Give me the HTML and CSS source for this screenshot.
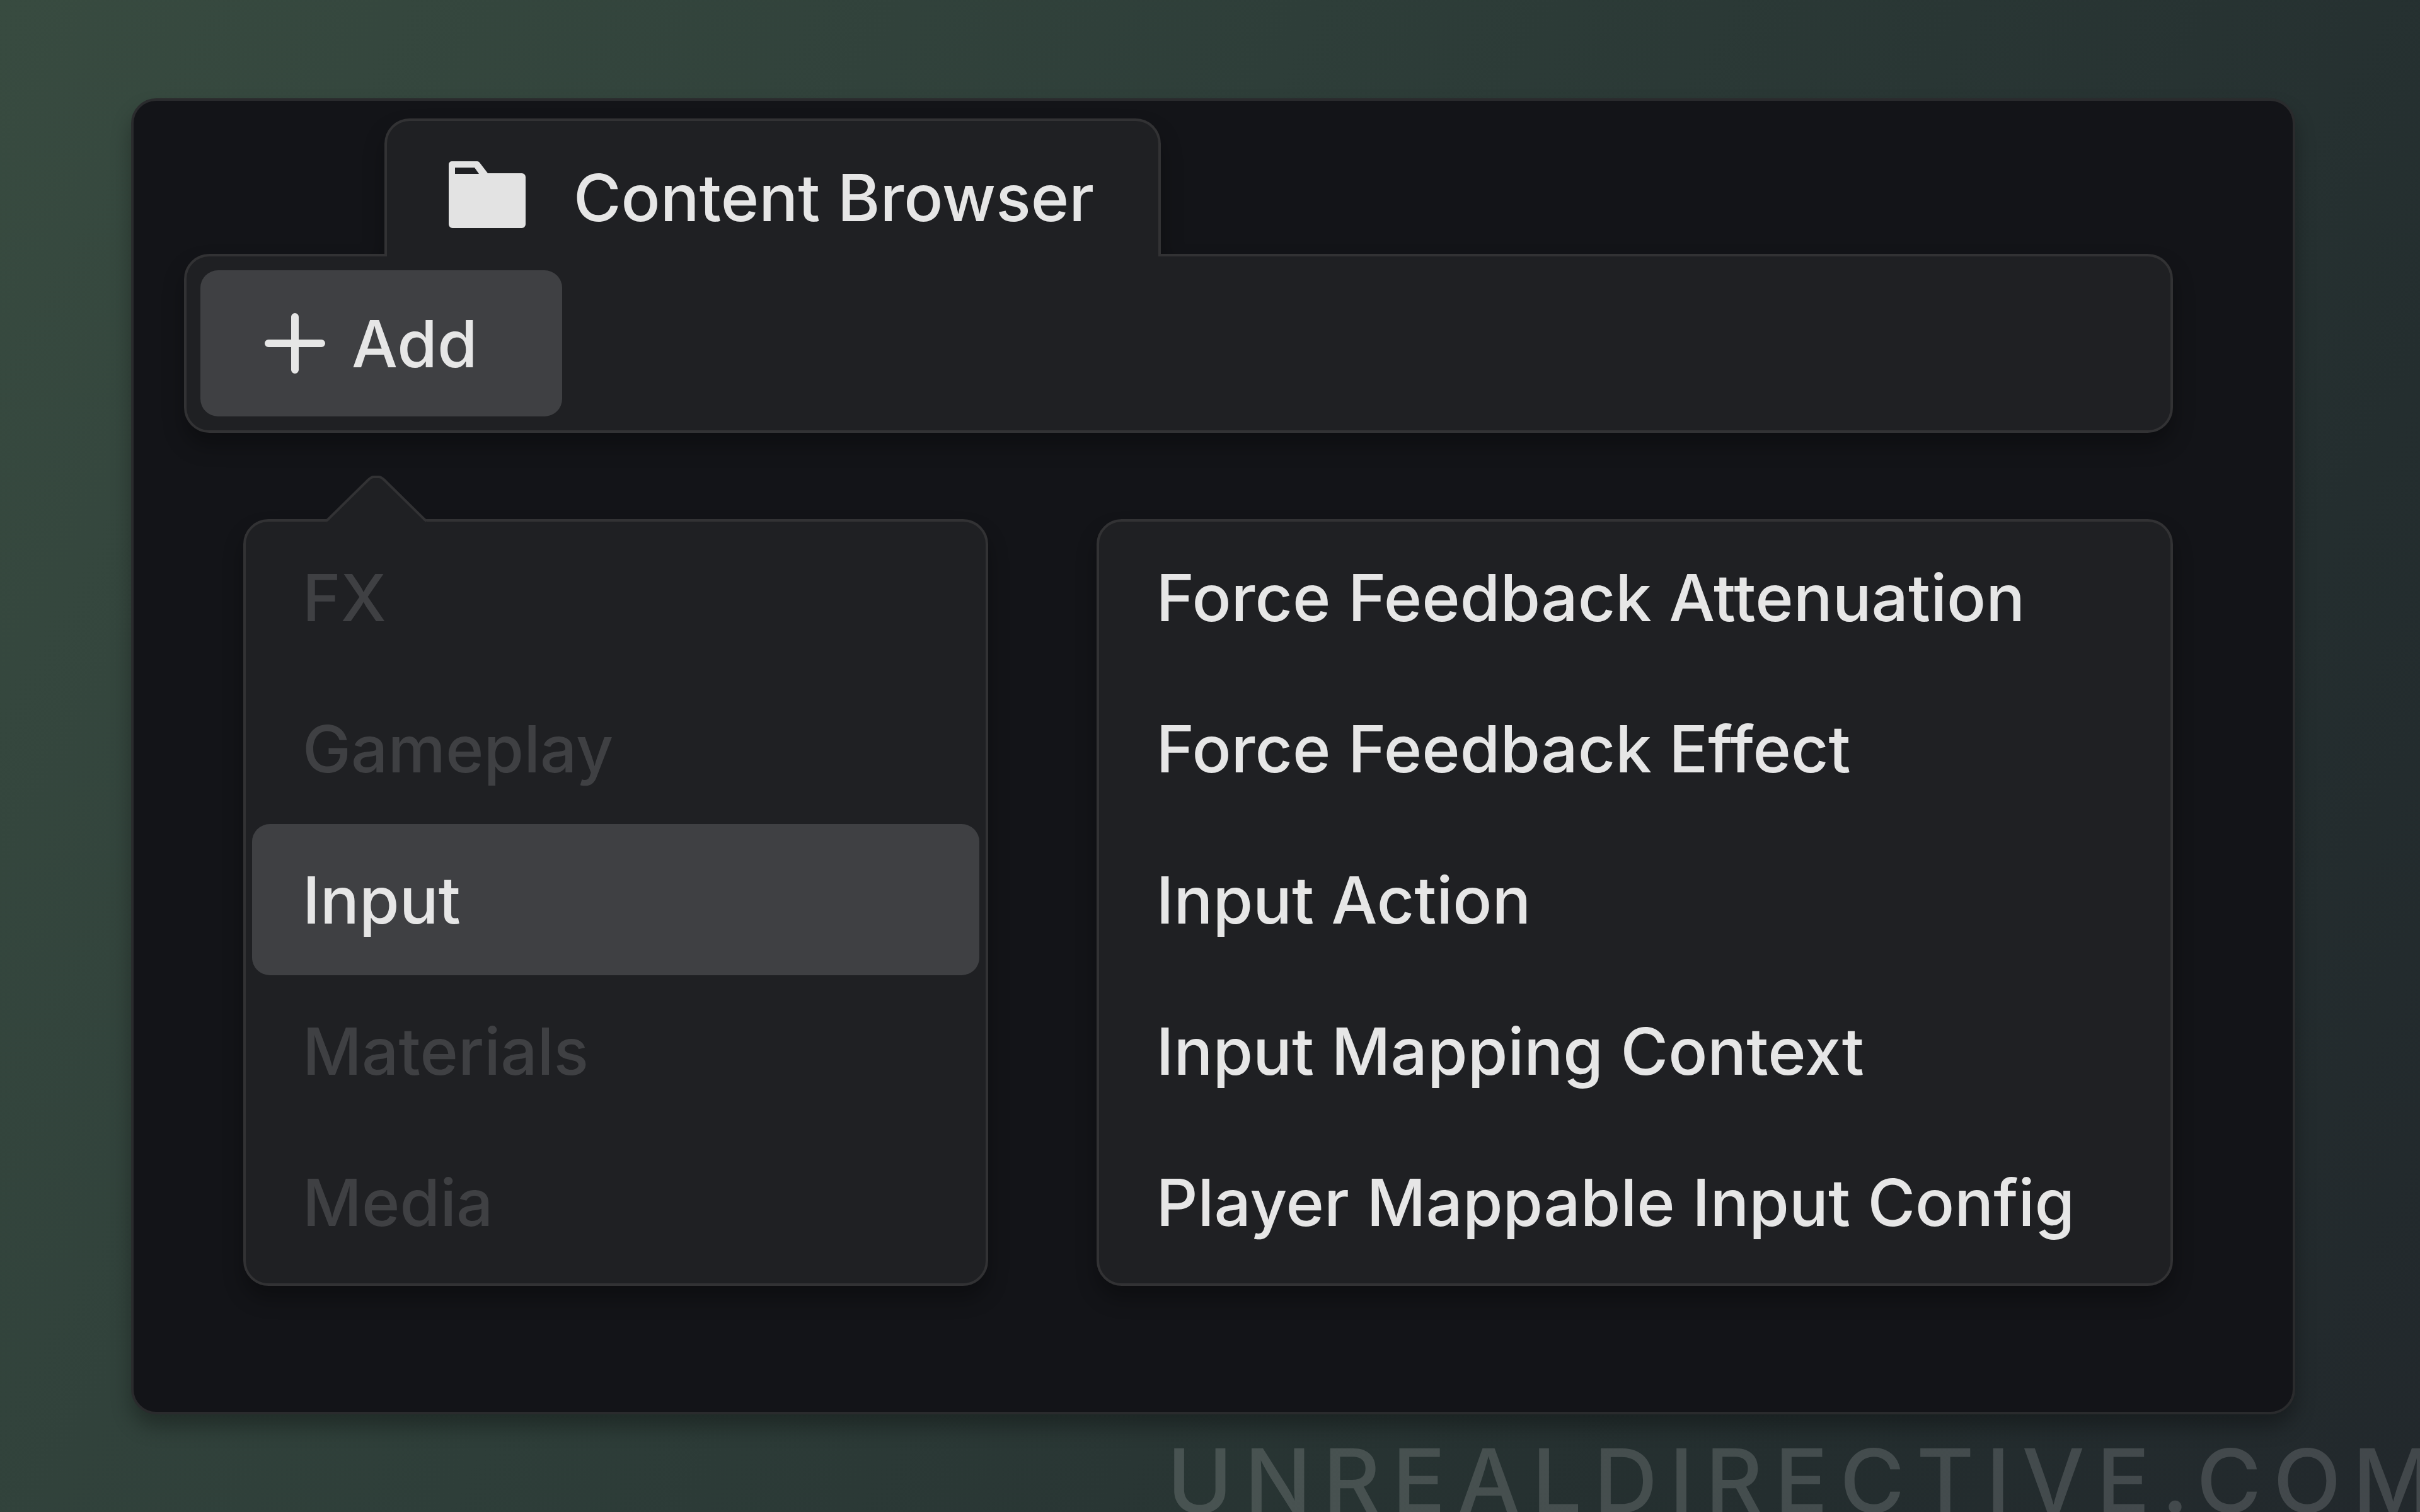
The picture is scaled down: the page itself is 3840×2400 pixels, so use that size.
FILE: index.html
```html
<!DOCTYPE html>
<html lang="en">
<head>
    <meta charset="UTF-8">
    <meta name="viewport" content="width=device-width, initial-scale=1.0">
    <link rel="stylesheet" href="styles.css">

    <title>Content Browser</title>
</head>
<body>

    <main class="window">
        <div class="browser">
            <button class="tab" type="button">
                <svg class="folder-icon" viewBox="0 0 122 106" aria-hidden="true">
                    <path fill-rule="evenodd" d="M5 0H44a6 6 0 0 1 5 2L62 19H116a6 6 0 0 1 6 6V100a6 6 0 0 1-6 6H6a6 6 0 0 1-6-6V5a5 5 0 0 1 5-5ZM10 10V20H48L41 10Z"/>
                </svg>
                Content Browser
            </button>
            <div class="toolbar">
                <button class="add-button" type="button">
                    <svg class="plus-icon" viewBox="0 0 96 96" aria-hidden="true">
                        <path d="M48 6V90M6 48H90"/>
                    </svg>
                    Add
                </button>
            </div>
        </div>

        <div class="menus">
            <div class="menu categories">
                <svg class="arrow" viewBox="0 0 160 74" aria-hidden="true">
                    <path d="M0 74V72L67 7Q80 -3 93 7L160 72V74Z"/>
                    <path class="arrow-line" d="M0 72L3 70L67 7Q72 2 76 2H84Q88 2 93 7L157 70L160 72"/>
                </svg>
                <button type="button" disabled>FX</button>
                <button type="button" disabled>Gameplay</button>
                <button type="button" class="selected">Input</button>
                <button type="button" disabled>Materials</button>
                <button type="button" disabled>Media</button>
            </div>

            <div class="menu assets">
                <button type="button">Force Feedback Attenuation</button>
                <button type="button">Force Feedback Effect</button>
                <button type="button">Input Action</button>
                <button type="button">Input Mapping Context</button>
                <button type="button">Player Mappable Input Config</button>
            </div>
        </div>
    </main>

    <p class="watermark">UNREALDIRECTIVE.COM</p>

</body>
</html>
```
FILE: styles.css
```css
* {
    box-sizing: border-box;
}

body {
    height: 100vh;
    margin: 0;
    padding: 156px 198px 0 208px;
    overflow: hidden;
    font-family: Inter, sans-serif;
    font-size: 103px;
    font-weight: 500;
    font-optical-sizing: none;
    color: #e6e6e6;
    background: linear-gradient(120deg, #384b40 0%, #2e3e39 40%, #242e2f 80%, #22282c 100%);
}

button {
    font: inherit;
    color: inherit;
    background: none;
    border: none;
    cursor: pointer;
}

.window {
    padding: 28px 190px 200px 80px;
    background-color: #131418;
    border: 4px solid #2a2b2d;
    border-radius: 40px;
    box-shadow: 0 20px 32px rgba(0, 0, 0, 0.3);
}

.browser {
    filter: drop-shadow(0 20px 16px rgba(0, 0, 0, 0.3));
}

.tab {
    display: flex;
    align-items: center;
    gap: 76px;
    position: relative;
    height: 219px;
    margin: 0 0 -4px 318px;
    padding: 28px 102px 0 98px;
    background-color: #1f2023;
    border: 4px solid #323234;
    border-bottom: none;
    border-radius: 40px 40px 0 0;
}

.folder-icon {
    width: 122px;
    height: 106px;
    margin-bottom: 10px;
    fill: #e3e3e3;
}

.toolbar {
    padding: 22px;
    background-color: #1f2023;
    border: 4px solid #323234;
    border-radius: 40px;
}

.add-button {
    display: flex;
    align-items: center;
    gap: 42px;
    height: 232px;
    padding: 0 134px 0 102px;
    background-color: #3f4043;
    border-radius: 28px;
}

.plus-icon {
    width: 96px;
    height: 96px;
    fill: none;
    stroke: #e6e6e6;
    stroke-width: 12;
    stroke-linecap: round;
}

.menus {
    display: grid;
    grid-template-columns: 1182fr 1707fr;
    gap: 172px;
    margin: 137px 0 0 94px;
}

.menu {
    display: flex;
    flex-direction: column;
    position: relative;
    padding: 0 10px 9px;
    background-color: #1f2023;
    border: 4px solid #323234;
    border-radius: 40px;
    box-shadow: 0 20px 32px rgba(0, 0, 0, 0.3);
}

.menu button {
    height: 240px;
    padding: 0 80px;
    text-align: left;
    white-space: nowrap;
    border-radius: 28px;
}

.menu button:disabled {
    color: #3f4043;
}

.menu .selected {
    background-color: #3f4043;
}

/* pointer to the Add button */
.arrow {
    position: absolute;
    top: -73px;
    left: 127px;
    width: 160px;
    height: 74px;
    fill: #1f2023;
}

.arrow-line {
    fill: none;
    stroke: #323234;
    stroke-width: 4;
}

.watermark {
    margin: 20px 0 0 1644px;
    font-size: 140px;
    line-height: 170px;
    letter-spacing: 19px;
    white-space: nowrap;
    color: rgba(255, 255, 255, 0.15);
}
```
